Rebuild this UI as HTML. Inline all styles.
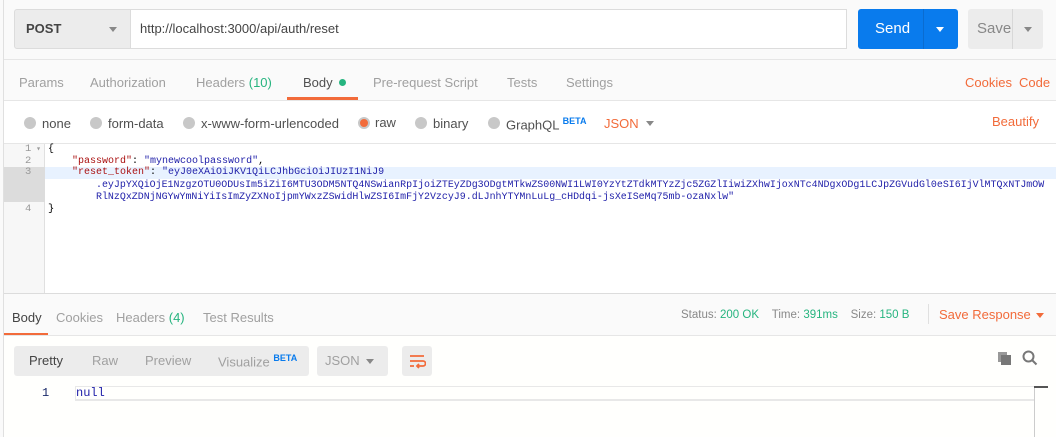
<!DOCTYPE html>
<html><head><meta charset="utf-8"><style>
*{margin:0;padding:0;box-sizing:border-box}
body{width:1056px;height:437px;overflow:hidden;background:#fafafa;font-family:"Liberation Sans",sans-serif;font-size:13px;color:#505050;position:relative}
.a{position:absolute;white-space:nowrap}
.mono{font-family:"Liberation Mono","DejaVu Sans Mono",monospace;font-size:10.5px}
.g{color:#a0a0a0}
.o{color:#f26b3a}
.gr{color:#26b47f}
.radio{position:absolute;width:12px;height:12px;border-radius:50%;background:#c8c8c8;top:117px}
.caret{position:absolute;width:0;height:0;border-left:4px solid transparent;border-right:4px solid transparent;border-top:5px solid #888}
</style></head><body>
<div class="a" style="left:3px;top:0;width:1px;height:437px;background:#e0e0e0"></div>
<div class="a" style="left:14px;top:9px;width:117px;height:40px;background:#ececec;border:1px solid #dcdcdc;border-radius:3px 0 0 3px"></div>
<div class="a" style="left:26px;top:21px;font-weight:bold;color:#444">POST</div>
<div class="caret" style="left:109px;top:27px"></div>
<div class="a" style="left:130px;top:9px;width:717px;height:40px;background:#fff;border:1px solid #dcdcdc"></div>
<div class="a" style="left:140px;top:21px;color:#444">http://localhost:3000/api/auth/reset</div>
<div class="a" style="left:858px;top:9px;width:100px;height:40px;background:#097bed;border-radius:3px"></div>
<div class="a" style="left:923px;top:9px;width:1px;height:40px;background:#0a6cd0"></div>
<div class="a" style="left:875px;top:20px;color:#fff;font-size:15px">Send</div>
<div class="caret" style="left:936px;top:27px;border-top-color:#fff"></div>
<div class="a" style="left:968px;top:9px;width:75px;height:40px;background:#ececec;border-radius:3px"></div>
<div class="a" style="left:1012px;top:9px;width:1px;height:40px;background:#d8d8d8"></div>
<div class="a" style="left:977px;top:20px;color:#888;font-size:15px">Save</div>
<div class="caret" style="left:1024px;top:27px"></div>
<div class="a" style="left:4px;top:59px;width:1052px;height:1px;background:#e6e6e6"></div>
<div class="a g" style="left:19px;top:75px">Params</div>
<div class="a g" style="left:90px;top:75px">Authorization</div>
<div class="a g" style="left:196px;top:75px">Headers <span class="gr">(10)</span></div>
<div class="a" style="left:303px;top:75px;color:#505050">Body</div>
<div class="a" style="left:339px;top:79px;width:7px;height:7px;border-radius:50%;background:#26b47f"></div>
<div class="a g" style="left:373px;top:75px">Pre-request Script</div>
<div class="a g" style="left:507px;top:75px">Tests</div>
<div class="a g" style="left:566px;top:75px">Settings</div>
<div class="a o" style="left:965px;top:75px">Cookies</div>
<div class="a o" style="left:1019px;top:75px">Code</div>
<div class="a" style="left:287px;top:97px;width:71px;height:3px;background:#f26b3a"></div>
<div class="a" style="left:4px;top:100px;width:1052px;height:43px;background:#fff;border-top:1px solid #e6e6e6"></div>
<div class="radio" style="left:24px"></div><div class="a" style="left:42px;top:116px;color:#505050">none</div>
<div class="radio" style="left:90px"></div><div class="a" style="left:108px;top:116px">form-data</div>
<div class="radio" style="left:183px"></div><div class="a" style="left:201px;top:116px">x-www-form-urlencoded</div>
<div class="radio" style="left:358px;border:2px solid #c8c8c8;background:#f26b3a"></div><div class="a" style="left:375px;top:115px">raw</div>
<div class="radio" style="left:415px"></div><div class="a" style="left:433px;top:116px">binary</div>
<div class="radio" style="left:488px"></div><div class="a" style="left:506px;top:116px">GraphQL <sup style="color:#097bed;font-size:9px;font-weight:bold">BETA</sup></div>
<div class="a o" style="left:604px;top:116px">JSON</div>
<div class="caret" style="left:646px;top:121px"></div>
<div class="a o" style="left:992px;top:114px">Beautify</div>
<div class="a" style="left:4px;top:143px;width:1052px;height:151px;background:#fff;border-top:1px solid #e6e6e6;border-bottom:1px solid #dcdcdc"></div>
<div class="a" style="left:4px;top:144px;width:41px;height:149px;background:#f7f7f7;border-right:1px solid #e0e0e0"></div>
<div class="a" style="left:4px;top:167px;width:41px;height:35px;background:#dcdcdc"></div>
<div class="a" style="left:45px;top:167px;width:1011px;height:12px;background:#e8f2ff"></div>
<div class="a mono" style="left:25px;top:144px;color:#999;line-height:11.5px">1<span style="font-size:8px"> ▾</span><br>2<br>3</div>
<div class="a mono" style="left:25px;top:203px;color:#999">4</div>
<div class="a mono" style="left:48px;top:144px;line-height:11.5px;color:#000;font-size:10px">{<br>&nbsp;&nbsp;&nbsp;&nbsp;<span style="color:#a11">"password"</span>: <span style="color:#22a">"mynewcoolpassword"</span>,<br>&nbsp;&nbsp;&nbsp;&nbsp;<span style="color:#a11">"reset_token"</span>: <span style="color:#22a">"eyJ0eXAiOiJKV1QiLCJhbGciOiJIUzI1NiJ9</span></div>
<div class="a mono" style="left:96px;top:179px;line-height:11.5px;color:#22a;font-size:9.95px">.eyJpYXQiOjE1NzgzOTU0ODUsIm5iZiI6MTU3ODM5NTQ4NSwianRpIjoiZTEyZDg3ODgtMTkwZS00NWI1LWI0YzYtZTdkMTYzZjc5ZGZlIiwiZXhwIjoxNTc4NDgxODg1LCJpZGVudGl0eSI6IjVlMTQxNTJmOW<br>RlNzQxZDNjNGYwYmNiYiIsImZyZXNoIjpmYWxzZSwidHlwZSI6ImFjY2VzcyJ9.dLJnhYTYMnLuLg_cHDdqi-jsXeISeMq75mb-ozaNxlw"</div>
<div class="a mono" style="left:48px;top:203px;color:#000">}</div>
<div class="a" style="left:12px;top:310px;color:#444">Body</div>
<div class="a g" style="left:56px;top:310px">Cookies</div>
<div class="a g" style="left:116px;top:310px">Headers <span class="gr">(4)</span></div>
<div class="a g" style="left:203px;top:310px">Test Results</div>
<div class="a" style="left:4px;top:333px;width:44px;height:3px;background:#f26b3a"></div>
<div class="a" style="left:4px;top:335px;width:1052px;height:1px;background:#e6e6e6"></div>
<div class="a" style="left:681px;top:309px;font-size:11.5px;color:#888">Status: <span class="gr">200 OK</span>&nbsp;&nbsp;&nbsp;&nbsp;Time: <span class="gr">391ms</span>&nbsp;&nbsp;&nbsp;&nbsp;Size: <span class="gr">150 B</span></div>
<div class="a" style="left:928px;top:304px;width:1px;height:20px;background:#e0e0e0"></div>
<div class="a o" style="left:939px;top:307px">Save Response</div>
<div class="caret" style="left:1036px;top:313px;border-top-color:#f26b3a"></div>
<div class="a" style="left:4px;top:336px;width:1052px;height:101px;background:#fffffd"></div>
<div class="a" style="left:14px;top:346px;width:295px;height:30px;background:#ececec;border-radius:3px"></div>
<div class="a" style="left:29px;top:353px;color:#444">Pretty</div>
<div class="a g" style="left:92px;top:353px">Raw</div>
<div class="a g" style="left:145px;top:353px">Preview</div>
<div class="a g" style="left:218px;top:353px">Visualize <sup style="color:#097bed;font-size:9px;font-weight:bold">BETA</sup></div>
<div class="a" style="left:317px;top:346px;width:71px;height:30px;background:#ececec;border-radius:3px"></div>
<div class="a g" style="left:325px;top:353px">JSON</div>
<div class="caret" style="left:366px;top:359px"></div>
<div class="a" style="left:402px;top:346px;width:30px;height:30px;background:#ececec;border-radius:3px"></div>
<svg class="a" style="left:408px;top:352px" width="18" height="18" viewBox="0 0 18 18"><path d="M2 4H16M2 9H15a2.5 2.5 0 0 1 0 5H9M11 12L9 14L11 16M2 14H6" stroke="#f26b3a" stroke-width="1.8" fill="none"/></svg>
<svg class="a" style="left:997px;top:351px" width="16" height="16" viewBox="0 0 16 16"><rect x="1" y="1" width="9" height="10" fill="#999"/><rect x="4" y="4" width="10" height="10" fill="#777"/></svg>
<svg class="a" style="left:1022px;top:350px" width="16" height="16" viewBox="0 0 16 16"><circle cx="6.5" cy="6.5" r="5" stroke="#777" stroke-width="2" fill="none"/><path d="M10 10L14.5 14.5" stroke="#777" stroke-width="2"/></svg>
<div class="a mono" style="left:42px;top:386px;color:#1a2a6a;font-size:12px">1</div>
<div class="a" style="left:75px;top:386px;width:960px;height:15px;border:1px solid #e8e8e8;border-bottom-width:2px"></div>
<div class="a mono" style="left:76px;top:386px;color:#22a;font-size:12px">null</div>
<div class="a" style="left:1034px;top:386px;width:1px;height:51px;background:#ccc"></div>
<div class="a" style="left:1034px;top:386px;width:14px;height:2px;background:#555"></div>
</body></html>
